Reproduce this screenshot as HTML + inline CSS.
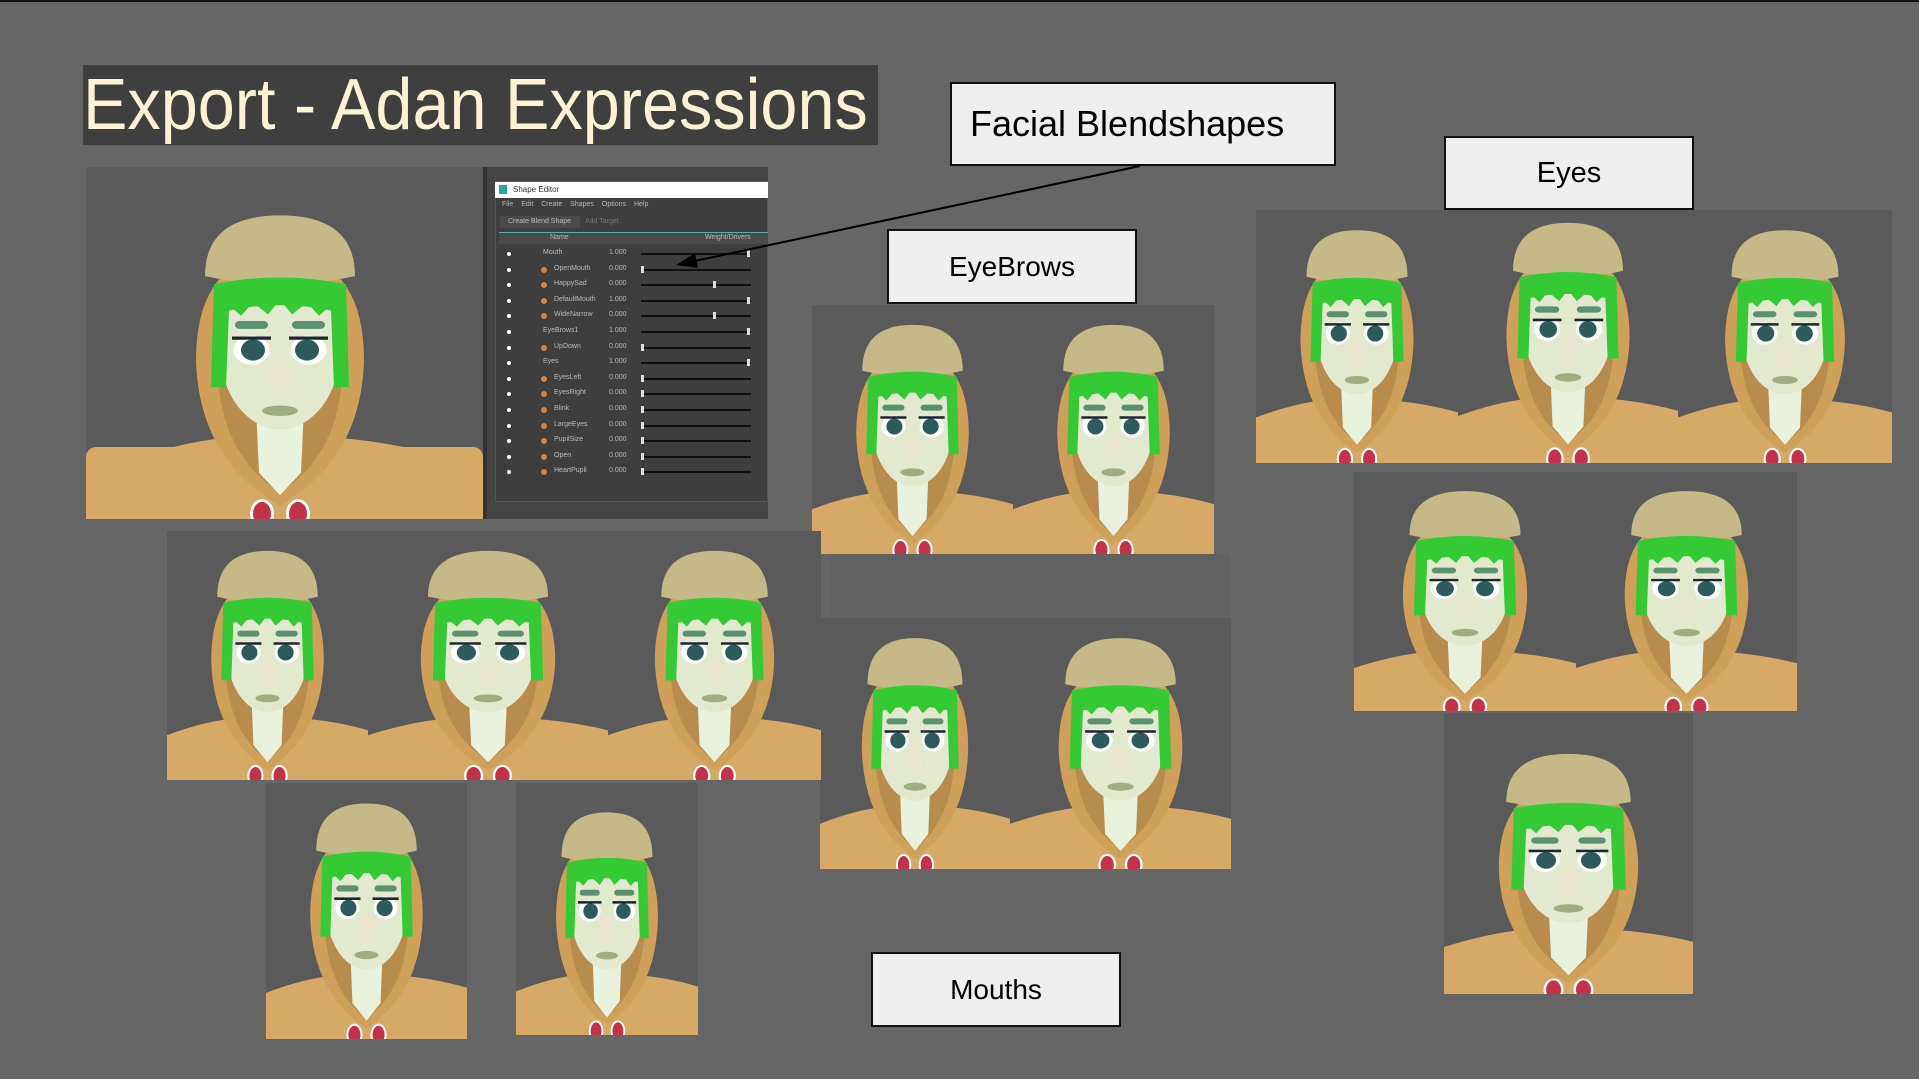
<!DOCTYPE html>
<html><head><meta charset="utf-8"><style>
*{margin:0;padding:0;box-sizing:border-box}
body{width:1919px;height:1079px;background:#666;position:relative;overflow:hidden;font-family:"Liberation Sans",Arial,sans-serif}
.a{position:absolute}
.p{position:absolute;background:#5a5a5a;overflow:hidden}
.box{position:absolute;background:#efefef;border:2px solid #111;color:#000;display:flex;align-items:center;justify-content:center}
.se{font-size:7px;color:#bbb}
.row{position:absolute;left:0;height:15px;width:280px}
</style></head><body>
<svg width="0" height="0" style="position:absolute">
<defs>
<symbol id="c" viewBox="0 0 200 250" preserveAspectRatio="none">
<path d="M0 205 Q40 190 70 188 L130 188 Q165 190 200 200 L200 250 L0 250Z" fill="#d6aa66"/>
<path d="M100 240 Q46 205 44 130 Q44 52 100 48 Q156 52 156 130 Q154 205 100 240Z" fill="#cfa05a"/>
<path d="M100 230 Q58 200 58 128 Q58 70 100 66 Q142 70 142 128 Q142 200 100 230Z" fill="#b88c4c"/>
<path d="M84 165 L116 165 L114 215 L100 232 L86 215Z" fill="#e9f2dc"/>
<ellipse cx="100" cy="122" rx="40" ry="60" fill="#e3e9cf"/>
<path d="M50 66 Q50 20 100 20 Q150 20 150 66 Q100 78 50 66Z" fill="#c5b987"/>
<path d="M56 72 Q100 62 144 72 L146 150 L136 150 L134 92 Q100 84 66 92 L64 150 L54 150Z" fill="#35c935"/>
<path d="M66 88 L74 96 L82 86 L92 95 L100 84 L108 95 L118 86 L126 96 L134 88 L134 80 L66 80Z" fill="#35c935"/>
<rect x="70" y="100" width="22" height="6" rx="3" fill="#5b9070"/>
<rect x="108" y="100" width="22" height="6" rx="3" fill="#5b9070"/>
<ellipse cx="81" cy="122" rx="12" ry="11" fill="#fff"/>
<ellipse cx="119" cy="122" rx="12" ry="11" fill="#fff"/>
<circle cx="82" cy="122" r="8" fill="#2d5b5b"/>
<circle cx="118" cy="122" r="8" fill="#2d5b5b"/>
<path d="M68 113 L94 113 M106 113 L132 113" stroke="#1d2633" stroke-width="2.5"/>
<ellipse cx="100" cy="142" rx="8" ry="14" fill="#ebe6cf"/>
<ellipse cx="100" cy="168" rx="12" ry="4" fill="#9fae82"/>
<ellipse cx="88" cy="246" rx="7" ry="10" fill="#c23248" stroke="#fff" stroke-width="2"/>
<ellipse cx="112" cy="246" rx="7" ry="10" fill="#c23248" stroke="#fff" stroke-width="2"/>
</symbol>
</defs></svg>

<div class="a" style="left:0;top:0;width:1919px;height:2px;background:#111"></div>

<div class="a" style="left:83px;top:65px;width:795px;height:80px;background:#3f3f3f;overflow:hidden"><div style="color:#fdf3d4;font-size:72px;line-height:80px;white-space:nowrap;transform:scaleX(0.925);transform-origin:0 0">Export - Adan Expressions</div></div>

<!-- main render -->
<div class="p" style="left:86px;top:167px;width:397px;height:352px">
 <div class="a" style="left:0;top:280px;width:397px;height:72px;background:#d6aa66;border-radius:10px 10px 0 0"></div>
 <svg class="a" style="left:44px;top:22px" width="300" height="330"><use href="#c" width="300" height="330"/></svg>
</div>
<div class="a" style="left:483px;top:167px;width:285px;height:352px;background:#444"></div>
<div class="a" style="left:483px;top:167px;width:4px;height:352px;background:#333"></div>
<div class="a" style="left:495px;top:181px;width:273px;height:321px;background:#3e3e3e;border:1px solid #555"></div>
<div class="a se" style="left:495px;top:182px;width:273px;height:16px;background:#fff;color:#333;font-size:8px;line-height:16px;padding-left:18px">Shape Editor</div>
<div class="a" style="left:499px;top:185px;width:8px;height:9px;background:#2aa5a5"></div>
<div class="a se" style="left:502px;top:201px;word-spacing:6px">File Edit Create Shapes Options Help</div>
<div class="a se" style="left:500px;top:216px;width:80px;height:12px;background:#4a4a4a;line-height:12px;padding-left:8px">Create Blend Shape</div>
<div class="a se" style="left:585px;top:218px;color:#777">Add Target</div>
<div class="a" style="left:499px;top:232px;width:269px;height:12px;background:#4a4a4a;border-top:1px solid #5aa"></div>
<div class="a se" style="left:550px;top:234px">Name</div>
<div class="a se" style="left:705px;top:234px">Weight/Drivers</div>
<div class="a" style="left:499px;top:246px;width:269px">
 <div class="row" style="top:0"><i class="a" style="left:8px;top:6px;width:4px;height:4px;background:#fff;border-radius:50%"></i><span class="a se" style="left:44px;top:3px">Mouth</span><span class="a se" style="left:110px;top:3px">1.000</span><i class="a" style="left:142px;top:7px;width:110px;height:2px;background:#111"></i><i class="a" style="left:248px;top:4px;width:3px;height:7px;background:#ddd"></i></div>
 <div class="row" style="top:15.6px"><i class="a" style="left:8px;top:6px;width:4px;height:4px;background:#fff;border-radius:50%"></i><i class="a" style="left:42px;top:5px;width:6px;height:6px;background:#d9823e;border-radius:50%"></i><span class="a se" style="left:55px;top:3px">OpenMouth</span><span class="a se" style="left:110px;top:3px">0.000</span><i class="a" style="left:142px;top:7px;width:110px;height:2px;background:#111"></i><i class="a" style="left:142px;top:4px;width:3px;height:7px;background:#ddd"></i></div>
 <div class="row" style="top:31.2px"><i class="a" style="left:8px;top:6px;width:4px;height:4px;background:#fff;border-radius:50%"></i><i class="a" style="left:42px;top:5px;width:6px;height:6px;background:#d9823e;border-radius:50%"></i><span class="a se" style="left:55px;top:3px">HappySad</span><span class="a se" style="left:110px;top:3px">0.000</span><i class="a" style="left:142px;top:7px;width:110px;height:2px;background:#111"></i><i class="a" style="left:214px;top:4px;width:3px;height:7px;background:#ddd"></i></div>
 <div class="row" style="top:46.8px"><i class="a" style="left:8px;top:6px;width:4px;height:4px;background:#fff;border-radius:50%"></i><i class="a" style="left:42px;top:5px;width:6px;height:6px;background:#d9823e;border-radius:50%"></i><span class="a se" style="left:55px;top:3px">DefaultMouth</span><span class="a se" style="left:110px;top:3px">1.000</span><i class="a" style="left:142px;top:7px;width:110px;height:2px;background:#111"></i><i class="a" style="left:248px;top:4px;width:3px;height:7px;background:#ddd"></i></div>
 <div class="row" style="top:62.4px"><i class="a" style="left:8px;top:6px;width:4px;height:4px;background:#fff;border-radius:50%"></i><i class="a" style="left:42px;top:5px;width:6px;height:6px;background:#d9823e;border-radius:50%"></i><span class="a se" style="left:55px;top:3px">WideNarrow</span><span class="a se" style="left:110px;top:3px">0.000</span><i class="a" style="left:142px;top:7px;width:110px;height:2px;background:#111"></i><i class="a" style="left:214px;top:4px;width:3px;height:7px;background:#ddd"></i></div>
 <div class="row" style="top:78px"><i class="a" style="left:8px;top:6px;width:4px;height:4px;background:#fff;border-radius:50%"></i><span class="a se" style="left:44px;top:3px">EyeBrows1</span><span class="a se" style="left:110px;top:3px">1.000</span><i class="a" style="left:142px;top:7px;width:110px;height:2px;background:#111"></i><i class="a" style="left:248px;top:4px;width:3px;height:7px;background:#ddd"></i></div>
 <div class="row" style="top:93.6px"><i class="a" style="left:8px;top:6px;width:4px;height:4px;background:#fff;border-radius:50%"></i><i class="a" style="left:42px;top:5px;width:6px;height:6px;background:#d9823e;border-radius:50%"></i><span class="a se" style="left:55px;top:3px">UpDown</span><span class="a se" style="left:110px;top:3px">0.000</span><i class="a" style="left:142px;top:7px;width:110px;height:2px;background:#111"></i><i class="a" style="left:142px;top:4px;width:3px;height:7px;background:#ddd"></i></div>
 <div class="row" style="top:109.2px"><i class="a" style="left:8px;top:6px;width:4px;height:4px;background:#fff;border-radius:50%"></i><span class="a se" style="left:44px;top:3px">Eyes</span><span class="a se" style="left:110px;top:3px">1.000</span><i class="a" style="left:142px;top:7px;width:110px;height:2px;background:#111"></i><i class="a" style="left:248px;top:4px;width:3px;height:7px;background:#ddd"></i></div>
 <div class="row" style="top:124.8px"><i class="a" style="left:8px;top:6px;width:4px;height:4px;background:#fff;border-radius:50%"></i><i class="a" style="left:42px;top:5px;width:6px;height:6px;background:#d9823e;border-radius:50%"></i><span class="a se" style="left:55px;top:3px">EyesLeft</span><span class="a se" style="left:110px;top:3px">0.000</span><i class="a" style="left:142px;top:7px;width:110px;height:2px;background:#111"></i><i class="a" style="left:142px;top:4px;width:3px;height:7px;background:#ddd"></i></div>
 <div class="row" style="top:140.4px"><i class="a" style="left:8px;top:6px;width:4px;height:4px;background:#fff;border-radius:50%"></i><i class="a" style="left:42px;top:5px;width:6px;height:6px;background:#d9823e;border-radius:50%"></i><span class="a se" style="left:55px;top:3px">EyesRight</span><span class="a se" style="left:110px;top:3px">0.000</span><i class="a" style="left:142px;top:7px;width:110px;height:2px;background:#111"></i><i class="a" style="left:142px;top:4px;width:3px;height:7px;background:#ddd"></i></div>
 <div class="row" style="top:156px"><i class="a" style="left:8px;top:6px;width:4px;height:4px;background:#fff;border-radius:50%"></i><i class="a" style="left:42px;top:5px;width:6px;height:6px;background:#d9823e;border-radius:50%"></i><span class="a se" style="left:55px;top:3px">Blink</span><span class="a se" style="left:110px;top:3px">0.000</span><i class="a" style="left:142px;top:7px;width:110px;height:2px;background:#111"></i><i class="a" style="left:142px;top:4px;width:3px;height:7px;background:#ddd"></i></div>
 <div class="row" style="top:171.6px"><i class="a" style="left:8px;top:6px;width:4px;height:4px;background:#fff;border-radius:50%"></i><i class="a" style="left:42px;top:5px;width:6px;height:6px;background:#d9823e;border-radius:50%"></i><span class="a se" style="left:55px;top:3px">LargeEyes</span><span class="a se" style="left:110px;top:3px">0.000</span><i class="a" style="left:142px;top:7px;width:110px;height:2px;background:#111"></i><i class="a" style="left:142px;top:4px;width:3px;height:7px;background:#ddd"></i></div>
 <div class="row" style="top:187.2px"><i class="a" style="left:8px;top:6px;width:4px;height:4px;background:#fff;border-radius:50%"></i><i class="a" style="left:42px;top:5px;width:6px;height:6px;background:#d9823e;border-radius:50%"></i><span class="a se" style="left:55px;top:3px">PupilSize</span><span class="a se" style="left:110px;top:3px">0.000</span><i class="a" style="left:142px;top:7px;width:110px;height:2px;background:#111"></i><i class="a" style="left:142px;top:4px;width:3px;height:7px;background:#ddd"></i></div>
 <div class="row" style="top:202.8px"><i class="a" style="left:8px;top:6px;width:4px;height:4px;background:#fff;border-radius:50%"></i><i class="a" style="left:42px;top:5px;width:6px;height:6px;background:#d9823e;border-radius:50%"></i><span class="a se" style="left:55px;top:3px">Open</span><span class="a se" style="left:110px;top:3px">0.000</span><i class="a" style="left:142px;top:7px;width:110px;height:2px;background:#111"></i><i class="a" style="left:142px;top:4px;width:3px;height:7px;background:#ddd"></i></div>
 <div class="row" style="top:218.4px"><i class="a" style="left:8px;top:6px;width:4px;height:4px;background:#fff;border-radius:50%"></i><i class="a" style="left:42px;top:5px;width:6px;height:6px;background:#d9823e;border-radius:50%"></i><span class="a se" style="left:55px;top:3px">HeartPupil</span><span class="a se" style="left:110px;top:3px">0.000</span><i class="a" style="left:142px;top:7px;width:110px;height:2px;background:#111"></i><i class="a" style="left:142px;top:4px;width:3px;height:7px;background:#ddd"></i></div>
</div>

<!-- eyebrows -->
<div class="p" style="left:812px;top:305px;width:402px;height:249px"><svg width="402" height="249"><use href="#c" x="0" width="201" height="249"/><use href="#c" x="201" width="201" height="249"/></svg></div>
<div class="a" style="left:829px;top:554px;width:401px;height:64px;background:#626262"></div>
<!-- mouths 2 -->
<div class="p" style="left:820px;top:618px;width:411px;height:251px"><svg width="411" height="251"><use href="#c" x="0" width="190" height="251"/><use href="#c" x="190" width="221" height="251"/></svg></div>
<!-- eyes top -->
<div class="p" style="left:1256px;top:210px;width:636px;height:253px"><svg width="636" height="253"><use href="#c" x="0" width="202" height="253"/><use href="#c" x="202" y="-8" width="220" height="261"/><use href="#c" x="422" width="214" height="253"/></svg></div>
<!-- eyes mid -->
<div class="p" style="left:1354px;top:472px;width:443px;height:239px"><svg width="443" height="239"><use href="#c" x="0" width="222" height="239"/><use href="#c" x="222" width="221" height="239"/></svg></div>
<!-- eyes bottom -->
<div class="p" style="left:1444px;top:713px;width:249px;height:281px"><svg width="249" height="281"><use href="#c" x="0" y="20" width="249" height="261"/></svg></div>
<!-- mouth row -->
<div class="p" style="left:167px;top:531px;width:654px;height:249px"><svg width="654" height="249"><use href="#c" x="0" width="201" height="249"/><use href="#c" x="201" width="240" height="249"/><use href="#c" x="441" width="213" height="249"/></svg></div>
<div class="p" style="left:266px;top:783px;width:201px;height:256px"><svg width="201" height="256"><use href="#c" x="0" width="201" height="256"/></svg></div>
<div class="p" style="left:516px;top:783px;width:182px;height:252px"><svg width="182" height="252"><use href="#c" x="0" y="10" width="182" height="242"/></svg></div>

<!-- labels -->
<div class="box" style="left:950px;top:82px;width:386px;height:84px;font-size:36px;justify-content:flex-start;padding-left:18px">Facial Blendshapes</div>
<div class="box" style="left:1444px;top:136px;width:250px;height:74px;font-size:29px">Eyes</div>
<div class="box" style="left:887px;top:229px;width:250px;height:75px;font-size:28px">EyeBrows</div>
<div class="box" style="left:871px;top:952px;width:250px;height:75px;font-size:28px">Mouths</div>

<svg class="a" style="left:0;top:0" width="1919" height="1079">
<line x1="1140" y1="166" x2="690" y2="262" stroke="#000" stroke-width="2"/>
<polygon points="676,265 695,253 698,268" fill="#000"/>
</svg>
</body></html>
